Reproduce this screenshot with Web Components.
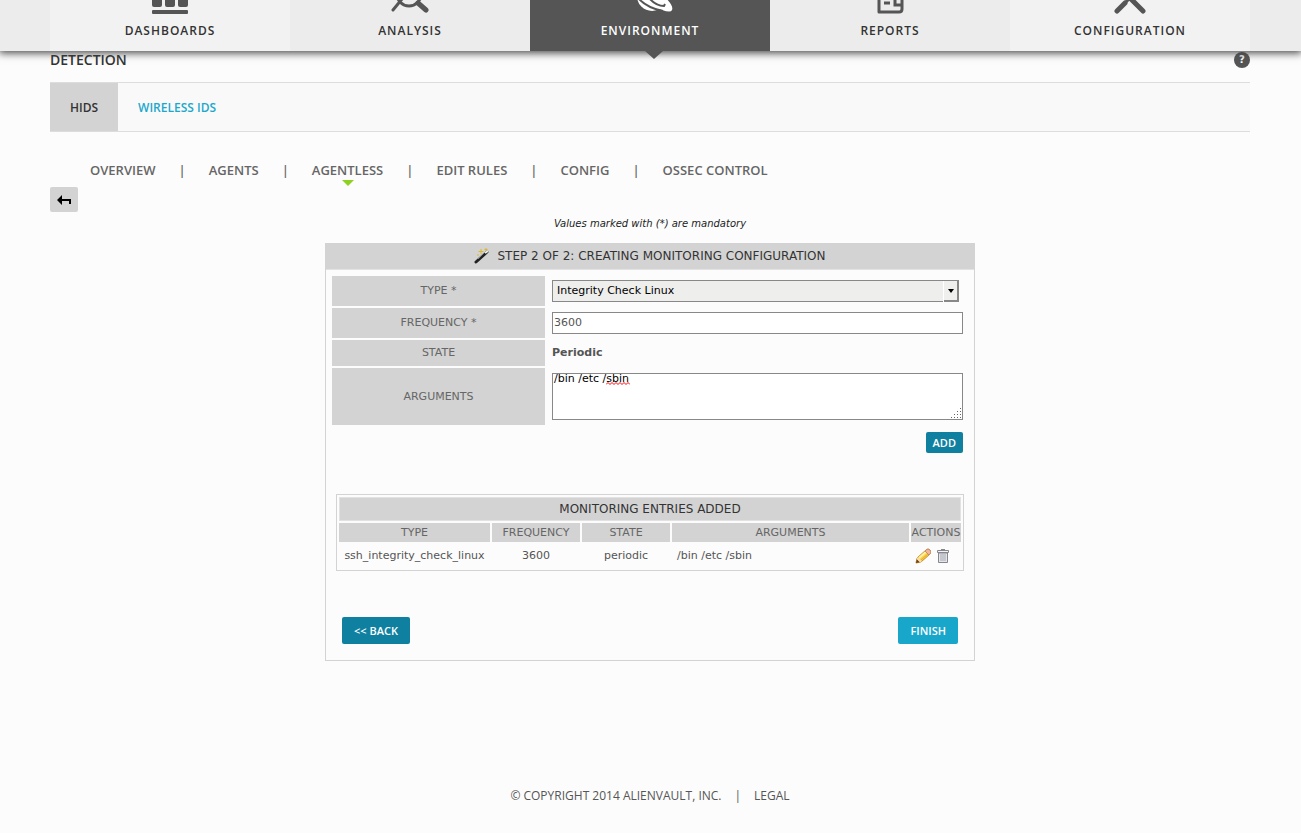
<!DOCTYPE html>
<html lang="en">
<head>
<meta charset="utf-8">
<title>Detection - Agentless</title>
<style>
  body {
    margin: 0;
    background: #fcfcfc;
    color: #555;
    font: 11px/14px "DejaVu Sans", sans-serif;
  }
</style>
</head>
<body>
<detection-page></detection-page>

<script>
const define = (name, html) => {
  const template = document.createElement('template');
  template.innerHTML = html;
  customElements.define(name, class extends HTMLElement {
    constructor() {
      super();
      this.attachShadow({ mode: 'open' }).append(template.content.cloneNode(true));
    }
  });
};

/* One section of the main navigation: an icon above a label */
define('nav-item', `
<style>
  :host { display: block; flex: 1 1 0; position: relative; background: #ececec; color: #333; }
  :host([light]) { background: #f2f2f2; }
  :host([active]) { background: #555; color: #fff; }
  a {
    display: flex; flex-direction: column; align-items: center; justify-content: flex-end;
    height: 51px; box-sizing: border-box; padding-bottom: 12px; gap: 8px; overflow: hidden;
    color: inherit; text-decoration: none;
    font: 600 12px/17px "Open Sans", sans-serif; letter-spacing: 1px;
  }
  ::slotted(svg) { display: block; flex: none; }
  :host([active])::after {
    content: ""; position: absolute; top: 100%; left: calc(50% - 5px);
    border: solid transparent; border-width: 8px 9px 0; border-top-color: #555;
  }
</style>
<a href="#"><slot name="icon"></slot><slot></slot></a>`);

define('main-nav', `
<style>
  :host { display: block; position: relative; z-index: 1; background: #ececec; box-shadow: 0 1px 8px 1px #444; }
  nav { display: flex; padding: 0 51px 0 50px; }
</style>
<nav aria-label="Main">
  <nav-item light>
    <svg slot="icon" width="38" height="32" viewBox="0 0 38 32" fill="#555">
      <rect x="1" y="10" width="10" height="15" rx="2"/><rect x="14" y="2" width="10" height="23" rx="2"/>
      <rect x="27" y="6" width="10" height="19" rx="2"/><rect x="1" y="28" width="36" height="4" rx="1"/>
    </svg>DASHBOARDS
  </nav-item>
  <nav-item>
    <svg slot="icon" width="40" height="32" viewBox="0 0 40 32" fill="none" stroke="#555" stroke-linecap="round">
      <circle cx="19" cy="12" r="12" stroke-width="3"/><path d="M28 21l8 7" stroke-width="5"/>
      <path d="M3 28l9-11" stroke-width="3"/>
    </svg>ANALYSIS
  </nav-item>
  <nav-item active>
    <svg slot="icon" width="52" height="32" viewBox="0 0 52 32">
      <circle cx="28" cy="14" r="15" fill="#fff"/>
      <path d="M40 14Q50 24 48 28Q47 31 38 28Q24 24 15 14z" fill="#fff"/>
      <path d="M14 16Q23 26 39 29M25 16Q32 24 40 24L41 22" fill="none" stroke="#555" stroke-width="2"/>
    </svg>ENVIRONMENT
  </nav-item>
  <nav-item>
    <svg slot="icon" width="28" height="32" viewBox="0 0 28 32" fill="none" stroke="#555" stroke-width="3">
      <path d="M3 4v26h20q3 0 3-3V15h-6V4z" stroke-linejoin="round"/><path d="M19 15v8h7"/><path d="M8 21h6M8 14h6"/>
    </svg>REPORTS
  </nav-item>
  <nav-item light>
    <svg slot="icon" width="36" height="32" viewBox="0 0 36 32" stroke="#555" stroke-linecap="round">
      <path d="M18 16L31 29" stroke-width="5"/><path d="M5 29l8-8" stroke-width="5"/>
      <path d="M5 3l14 14M13 21L31 3" stroke-width="3"/>
    </svg>CONFIGURATION
  </nav-item>
</nav>`);

define('section-title', `
<style>
  :host { display: flex; justify-content: space-between; align-items: center; height: 31px; box-sizing: border-box; padding-bottom: 13px; }
  h1 { margin: 0; color: #333; font: 600 14px/18px "Open Sans", sans-serif; }
  a { display: flex; align-items: center; justify-content: center; width: 16px; height: 16px; border-radius: 50%;
      background: #555; color: #fff; text-decoration: none; font: bold 10px/16px "DejaVu Sans", sans-serif; }
</style>
<h1><slot></slot></h1><a href="#" aria-label="Help">?</a>`);

define('section-tabs', `
<style>
  nav { display: flex; background: #f9f9f9; border: solid #ddd; border-width: 1px 0; }
  a { padding: 2px 20px 0; color: #1ba8cc; text-decoration: none; font: 600 12px/46px "Open Sans", sans-serif; }
  a[aria-current] { background: #d3d3d3; color: #333; }
  :host { display: block; }
</style>
<nav aria-label="Detection"><a href="#" aria-current="page">HIDS</a><a href="#">WIRELESS IDS</a></nav>`);

define('sub-nav', `
<style>
  :host { display: block; padding: 29px 40px 8px; color: #666; font: 600 13px/18px "Open Sans", sans-serif; }
  nav { display: flex; gap: 23px; }
  a { position: relative; color: inherit; text-decoration: none; }
  a[aria-current]::after { content: ""; position: absolute; top: 19px; left: calc(50% - 6px);
    border: solid transparent; border-width: 6px 6px 0; border-top-color: #8fd120; }
</style>
<nav aria-label="HIDS">
  <a href="#">OVERVIEW</a><span>|</span><a href="#">AGENTS</a><span>|</span><a href="#" aria-current="page">AGENTLESS</a><span>|</span><a href="#">EDIT RULES</a><span>|</span><a href="#">CONFIG</a><span>|</span><a href="#">OSSEC CONTROL</a>
</nav>`);

define('back-button', `
<style>
  :host { display: block; }
  button { display: flex; align-items: center; justify-content: center; width: 28px; height: 25px; padding: 0;
    border: 0; border-radius: 2px; background: #d3d3d3; }
</style>
<button type="button" aria-label="Back">
  <svg width="14" height="10" viewBox="0 0 14 10"><path d="M0 5L5 0V4H14V9H12V6H5V10Z"/></svg>
</button>`);

define('action-button', `
<style>
  :host { display: block; }
  button { display: block; border: 0; border-radius: 2px; padding: 0 12px; background: #1080a0; color: #fff;
    font: 600 11px/27px "Open Sans", sans-serif; }
  :host([small]) button { padding: 0 7px; line-height: 21px; }
  :host([bright]) button { background: #18a7cb; }
</style>
<button type="button"><slot></slot></button>`);

/* A grey label cell beside its control */
define('field-row', `
<style>
  :host { display: grid; grid-template-columns: 213px minmax(0, 1fr); min-height: 30px; }
  :host([compact]) { min-height: 26px; }
  :host([tall]) { min-height: 57px; }
  .label { display: flex; align-items: center; justify-content: center; background: #d3d3d3; color: #666; padding-bottom: 1px; }
  :host([tall]) .label { padding-bottom: 0; }
  .control { display: flex; align-items: center; padding: 0 5px 0 7px; color: #555; }
  :host([tall]) .control { align-items: flex-start; padding-top: 5px; }
</style>
<div class="label"><slot name="label"></slot></div><div class="control"><slot></slot></div>`);

define('entries-table', `
<style>
  :host { display: block; }
  table { width: 100%; box-sizing: border-box; table-layout: fixed; border: 1px solid #d3d3d3; border-collapse: separate; border-spacing: 2px; }
  th, td { padding: 0; text-align: center; font-weight: normal; }
  th { height: 19px; background: #d3d3d3; color: #666; }
  th[colspan] { box-sizing: border-box; height: 24px; border: 1px solid #e2e2e2; color: #333; font-size: 12px; }
  td { height: 24px; color: #555; }
  td.left { padding-left: 5px; text-align: left; }
  .type { width: 151px; } .mid { width: 88px; } .act { width: 50px; }
  .icons { display: flex; gap: 4px; padding-left: 4px; }
  button { display: block; padding: 0; border: 0; background: none; width: 16px; height: 16px; }
  svg { display: block; }
</style>
<table>
  <colgroup><col class="type"><col class="mid"><col class="mid"><col><col class="act"></colgroup>
  <thead>
    <tr><th colspan="5">MONITORING ENTRIES ADDED</th></tr>
    <tr><th>TYPE</th><th>FREQUENCY</th><th>STATE</th><th>ARGUMENTS</th><th>ACTIONS</th></tr>
  </thead>
  <tbody>
    <tr><td>ssh_integrity_check_linux</td><td>3600</td><td>periodic</td><td class="left">/bin /etc /sbin</td>
      <td><div class="icons">
        <button type="button" aria-label="Edit"><svg width="16" height="16" viewBox="0 0 16 16">
          <path d="M1 15l1-5L11 2q2-2 4 0t0 4L6 14z" fill="#fbd14b" stroke="#c08a2a"/>
          <path d="M4 10l8-7" stroke="#fff0a0" stroke-width="2"/><path d="M6 12l8-7" stroke="#eda821" stroke-width="1"/>
          <path d="M1 15l1-4 3 3z" fill="#6b4020"/><path d="M2 10l4 4" stroke="#f6dcb0" stroke-width="2"/>
          <path d="M11 2q2-2 4 0t0 4l-1 1-4-4z" fill="#f3b69a" stroke="#c2906f"/>
        </svg></button>
        <button type="button" aria-label="Delete"><svg width="16" height="16" viewBox="0 0 16 16">
          <path d="M3.500 5h9v9.500h-9z" fill="#e4e5ea" stroke="#85878c"/>
          <path d="M6 6v7M8 6v7M10 6v7" stroke="#a6a9b3"/>
          <path d="M2.500 2.500h11v2h-11z" fill="#f3f3f3" stroke="#85878c"/><path d="M6 1.500h4" stroke="#85878c"/>
        </svg></button>
      </div></td></tr>
  </tbody>
</table>`);

define('monitoring-form', `
<style>
  :host { display: block; max-width: 650px; margin: 0 auto; box-sizing: border-box; border: 1px solid #d3d3d3; }
  form { display: block; }
  h2 { display: flex; align-items: center; justify-content: center; gap: 7px; height: 26px; box-sizing: border-box; margin: 0; padding-bottom: 1px;
    border: solid #e2e2e2; border-width: 0 0 1px; background: #d3d3d3; color: #333; font: 12px/16px "DejaVu Sans", sans-serif; }
  .fields { display: grid; gap: 2px; padding: 6px 6px 0; }
  .select { display: block; position: relative; width: 100%; margin-right: 4px; }
  .select::before { content: ""; position: absolute; top: 1px; right: 0; width: 15px; height: 21px; box-sizing: border-box;
    border: solid #888; border-width: 0 2px 2px 0; background: #efefed; box-shadow: -1px 0 #fff; pointer-events: none; }
  .select::after { content: ""; position: absolute; top: 9px; right: 5px; border: solid transparent; border-width: 4px 3px 0;
    border-top-color: #000; pointer-events: none; }
  select, input, textarea { display: block; box-sizing: border-box; width: 100%; margin: 0; border: 1px solid #888; border-radius: 0;
    font: 11px/14px "DejaVu Sans", sans-serif; outline: 0; }
  select { appearance: none; height: 22px; padding: 0 20px 0 4px; background: #eeeeec; color: #000; }
  input { height: 22px; padding: 0 1px 1px; background: #fff; color: #555; }
  textarea { height: 47px; padding: 0 1px; line-height: 10px; resize: none; overflow: hidden; color: #000; background:
    url("data:image/svg+xml,%3Csvg xmlns='http://www.w3.org/2000/svg' width='24' height='3'%3E%3Cpath d='M0 2.500l2-2 2 2 2-2 2 2 2-2 2 2 2-2 2 2 2-2 2 2 2-2 2 2' fill='none' stroke='%23f00'/%3E%3C/svg%3E") 53px 8px no-repeat,
    url("data:image/svg+xml,%3Csvg xmlns='http://www.w3.org/2000/svg' width='11' height='11' fill='%23666'%3E%3Cpath d='M9 0h1v1h-1zM9 3h1v1h-1zM9 6h1v1h-1zM9 9h1v1h-1zM6 3h1v1h-1zM6 6h1v1h-1zM6 9h1v1h-1zM3 6h1v1h-1zM3 9h1v1h-1zM0 9h1v1h-1z'/%3E%3C/svg%3E") right bottom no-repeat, #fff; }
  .add { display: flex; justify-content: flex-end; padding: 7px 11px 0; }
  entries-table { margin: 41px 10px 0; }
  .steps { display: flex; justify-content: space-between; padding: 46px 16px 16px; }
</style>
<form>
  <h2><svg width="16" height="16" viewBox="0 0 16 16">
    <path d="M2 14L13 4" stroke="#222" stroke-width="3" stroke-linecap="round"/><path d="M4 11l7-7" stroke="#888"/>
    <path d="M11 5l3-2" stroke="#eee" stroke-width="2"/>
    <path d="M7 1v5M4.500 3.500h5M12 0v3M10.500 1.500h3M4 6v2" stroke="#d9b92c"/>
  </svg>STEP 2 OF 2: CREATING MONITORING CONFIGURATION</h2>
  <div class="fields">
    <field-row><label slot="label" for="type">TYPE *</label>
      <span class="select"><select id="type"><option>Integrity Check Linux</option></select></span></field-row>
    <field-row><label slot="label" for="frequency">FREQUENCY *</label><input id="frequency" value="3600"></field-row>
    <field-row compact><span slot="label">STATE</span><b>Periodic</b></field-row>
    <field-row tall><label slot="label" for="arguments">ARGUMENTS</label>
      <textarea id="arguments" spellcheck="false">/bin /etc /sbin</textarea></field-row>
  </div>
  <div class="add"><action-button small>ADD</action-button></div>
  <entries-table></entries-table>
  <div class="steps"><action-button>&lt;&lt; BACK</action-button><action-button bright>FINISH</action-button></div>
</form>`);

define('page-footer', `
<style>
  :host { display: flex; justify-content: center; gap: 13px; padding: 126px 0 28px; color: #555; font: 12px/18px "Open Sans", sans-serif; }
  a { color: inherit; text-decoration: none; }
</style>
<span>© COPYRIGHT 2014 ALIENVAULT, INC.</span><span>|</span><a href="#">LEGAL</a>`);

define('detection-page', `
<style>
  :host { display: block; }
  main { padding: 0 51px 0 50px; }
  p { margin: 5px 0 13px; text-align: center; color: #222; font: italic 10px/13px "DejaVu Sans", sans-serif; }
</style>
<main-nav></main-nav>
<main>
  <section-title>DETECTION</section-title>
  <section-tabs></section-tabs>
  <sub-nav></sub-nav>
  <back-button></back-button>
  <p>Values marked with (*) are mandatory</p>
  <monitoring-form></monitoring-form>
  <page-footer></page-footer>
</main>`);
</script>
</body>
</html>
